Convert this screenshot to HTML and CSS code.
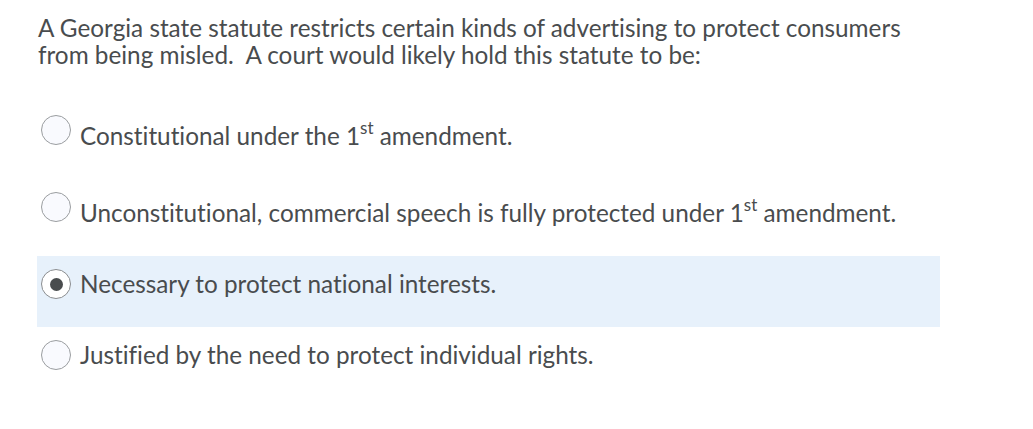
FILE: index.html
```html
<!DOCTYPE html>
<html>
<head>
<meta charset="utf-8">
<link rel="stylesheet" href="styles.css">
</head>
<body>
<div class="question">
  <p class="stem">A Georgia state statute restricts certain kinds of advertising to protect consumers from being misled.&nbsp; A court would likely hold this statute to be:</p>
  <div class="options">
    <label class="option">
      <span class="radio"></span>
      <span class="text">Constitutional under the 1<sup>st</sup> amendment.</span>
    </label>
    <label class="option">
      <span class="radio"></span>
      <span class="text">Unconstitutional, commercial speech is fully protected under 1<sup>st</sup> amendment.</span>
    </label>
    <label class="option selected">
      <span class="radio"><span class="dot"></span></span>
      <span class="text">Necessary to protect national interests.</span>
    </label>
    <label class="option">
      <span class="radio"></span>
      <span class="text">Justified by the need to protect individual rights.</span>
    </label>
  </div>
</div>
</body>
</html>
```
FILE: styles.css
```css
html, body {
  margin: 0;
  padding: 0;
  background: #ffffff;
}
body {
  font-family: Lato, "Noto Sans", sans-serif;
  color: #494c4e;
  font-size: 24.3px;
  font-variant-ligatures: none;
}
.question {
  width: 903px;
  padding-left: 37px;
  padding-top: 14px;
}
.stem {
  margin: 0 0 0 1px;
  font-size: 24.3px;
  line-height: 27px;
  width: 880px;
}
.options {
  margin-top: 34px;
  display: flex;
  flex-direction: column;
}
.option {
  display: flex;
  align-items: flex-start;
  gap: 9px;
  padding: 13px 0 28px 4px;
}
.option.selected {
  background: #e7f1fb;
}
.radio {
  flex: none;
  width: 28px;
  height: 28px;
  border: 1px solid #9a9da0;
  border-radius: 50%;
  background: #f9fafe;
  display: flex;
  align-items: center;
  justify-content: center;
}
.selected .radio {
  background: #ffffff;
  border-color: #8a8d90;
}
.dot {
  width: 13px;
  height: 13px;
  border-radius: 50%;
  background: #494c4e;
}
.text {
  font-size: 24.3px;
  line-height: 30px;
}
sup {
  font-size: 17px;
  line-height: 26px;
  vertical-align: 11px;
}
```
